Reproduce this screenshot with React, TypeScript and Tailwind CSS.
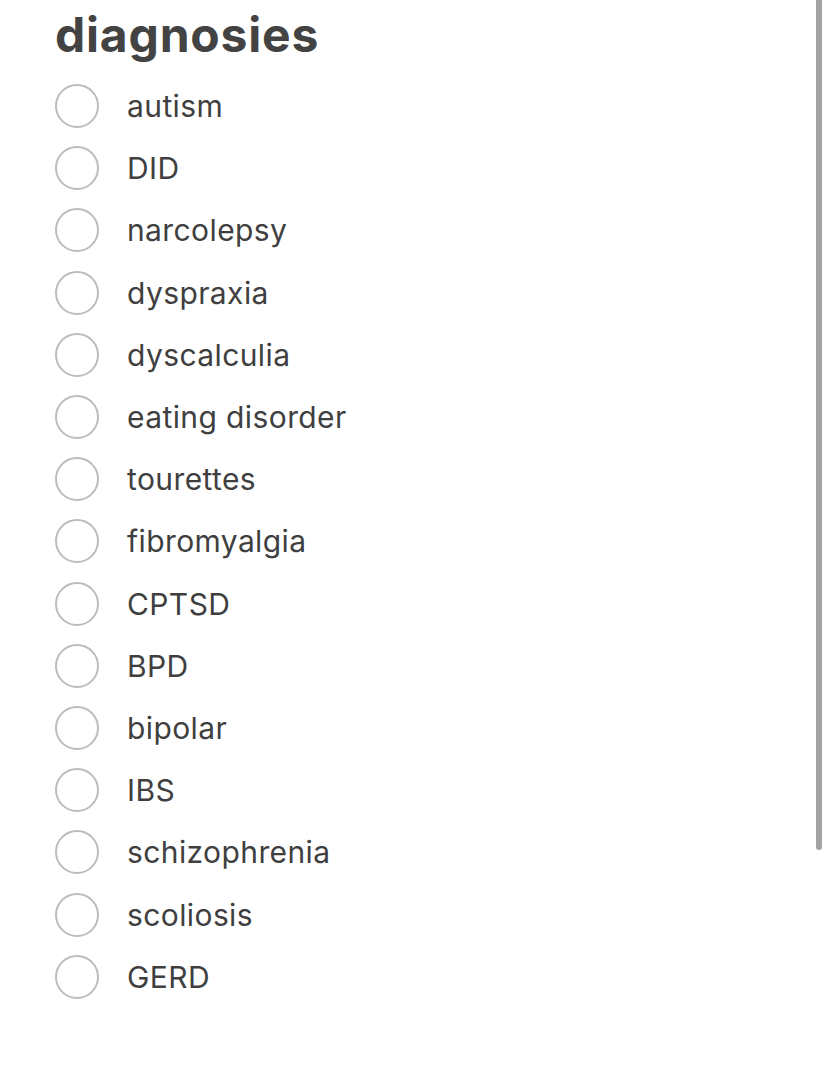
const diagnoses = [
  "autism",
  "DID",
  "narcolepsy",
  "dyspraxia",
  "dyscalculia",
  "eating disorder",
  "tourettes",
  "fibromyalgia",
  "CPTSD",
  "BPD",
  "bipolar",
  "IBS",
  "schizophrenia",
  "scoliosis",
  "GERD",
];

const Option = ({ label }: { label: string }) => (
  <label className="h-[62.2px] flex items-center gap-[28px] cursor-pointer select-none">
    <span className="w-[44px] h-[44px] shrink-0 rounded-full border-2 border-[#bcbcbc] bg-white" />
    <span className="text-[30px] leading-none text-[#3f3f3f] tracking-[0.4px]">
      {label}
    </span>
  </label>
);

export default function App() {
  return (
    <div
      className="relative min-h-[1080px] w-full bg-white overflow-hidden"
      style={{ fontFamily: "Inter, 'Noto Sans', sans-serif" }}
    >
      <div className="pl-[55px] pt-[7px]">
        <h1 className="text-[48px] leading-[56px] font-bold text-[#434343] tracking-[0.8px]">
          diagnosies
        </h1>
        <div className="mt-[12px] flex flex-col">
          {diagnoses.map((d) => (
            <Option key={d} label={d} />
          ))}
        </div>
      </div>
      {/* scroll indicator */}
      <div className="absolute right-[6px] top-0 w-[6px] h-[850px] rounded-b-full bg-[#a3a3a3]" />
    </div>
  );
}
